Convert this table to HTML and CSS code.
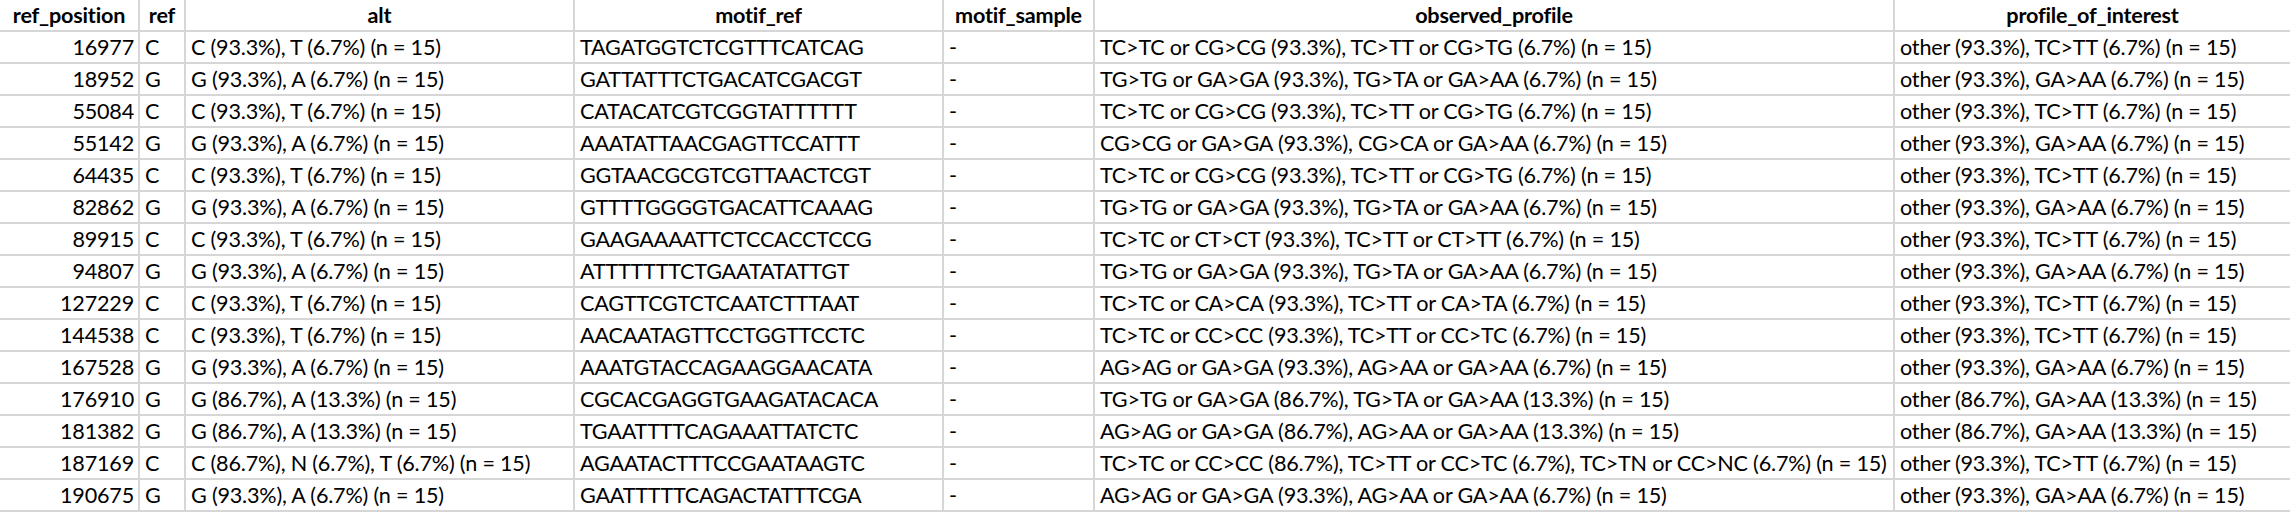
FILE: index.html
```html
<!DOCTYPE html>
<html>
<head>
<meta charset="utf-8">
<link rel="stylesheet" href="styles.css">
</head>
<body>
<table class="sheet">
<colgroup>
<col class="c-pos"><col class="c-ref"><col class="c-alt"><col class="c-motif"><col class="c-sample"><col class="c-obs"><col class="c-poi">
</colgroup>
<thead>
<tr><th>ref_position</th><th>ref</th><th>alt</th><th>motif_ref</th><th>motif_sample</th><th>observed_profile</th><th>profile_of_interest</th></tr>
</thead>
<tbody>
<tr><td class="num">16977</td><td>C</td><td>C (93.3%), T (6.7%) (n = 15)</td><td>TAGATGGTCTCGTTTCATCAG</td><td>-</td><td>TC&gt;TC or CG&gt;CG (93.3%), TC&gt;TT or CG&gt;TG (6.7%) (n = 15)</td><td>other (93.3%), TC&gt;TT (6.7%) (n = 15)</td></tr>
<tr><td class="num">18952</td><td>G</td><td>G (93.3%), A (6.7%) (n = 15)</td><td>GATTATTTCTGACATCGACGT</td><td>-</td><td>TG&gt;TG or GA&gt;GA (93.3%), TG&gt;TA or GA&gt;AA (6.7%) (n = 15)</td><td>other (93.3%), GA&gt;AA (6.7%) (n = 15)</td></tr>
<tr><td class="num">55084</td><td>C</td><td>C (93.3%), T (6.7%) (n = 15)</td><td>CATACATCGTCGGTATTTTTT</td><td>-</td><td>TC&gt;TC or CG&gt;CG (93.3%), TC&gt;TT or CG&gt;TG (6.7%) (n = 15)</td><td>other (93.3%), TC&gt;TT (6.7%) (n = 15)</td></tr>
<tr><td class="num">55142</td><td>G</td><td>G (93.3%), A (6.7%) (n = 15)</td><td>AAATATTAACGAGTTCCATTT</td><td>-</td><td>CG&gt;CG or GA&gt;GA (93.3%), CG&gt;CA or GA&gt;AA (6.7%) (n = 15)</td><td>other (93.3%), GA&gt;AA (6.7%) (n = 15)</td></tr>
<tr><td class="num">64435</td><td>C</td><td>C (93.3%), T (6.7%) (n = 15)</td><td>GGTAACGCGTCGTTAACTCGT</td><td>-</td><td>TC&gt;TC or CG&gt;CG (93.3%), TC&gt;TT or CG&gt;TG (6.7%) (n = 15)</td><td>other (93.3%), TC&gt;TT (6.7%) (n = 15)</td></tr>
<tr><td class="num">82862</td><td>G</td><td>G (93.3%), A (6.7%) (n = 15)</td><td>GTTTTGGGGTGACATTCAAAG</td><td>-</td><td>TG&gt;TG or GA&gt;GA (93.3%), TG&gt;TA or GA&gt;AA (6.7%) (n = 15)</td><td>other (93.3%), GA&gt;AA (6.7%) (n = 15)</td></tr>
<tr><td class="num">89915</td><td>C</td><td>C (93.3%), T (6.7%) (n = 15)</td><td>GAAGAAAATTCTCCACCTCCG</td><td>-</td><td>TC&gt;TC or CT&gt;CT (93.3%), TC&gt;TT or CT&gt;TT (6.7%) (n = 15)</td><td>other (93.3%), TC&gt;TT (6.7%) (n = 15)</td></tr>
<tr><td class="num">94807</td><td>G</td><td>G (93.3%), A (6.7%) (n = 15)</td><td>ATTTTTTTCTGAATATATTGT</td><td>-</td><td>TG&gt;TG or GA&gt;GA (93.3%), TG&gt;TA or GA&gt;AA (6.7%) (n = 15)</td><td>other (93.3%), GA&gt;AA (6.7%) (n = 15)</td></tr>
<tr><td class="num">127229</td><td>C</td><td>C (93.3%), T (6.7%) (n = 15)</td><td>CAGTTCGTCTCAATCTTTAAT</td><td>-</td><td>TC&gt;TC or CA&gt;CA (93.3%), TC&gt;TT or CA&gt;TA (6.7%) (n = 15)</td><td>other (93.3%), TC&gt;TT (6.7%) (n = 15)</td></tr>
<tr><td class="num">144538</td><td>C</td><td>C (93.3%), T (6.7%) (n = 15)</td><td>AACAATAGTTCCTGGTTCCTC</td><td>-</td><td>TC&gt;TC or CC&gt;CC (93.3%), TC&gt;TT or CC&gt;TC (6.7%) (n = 15)</td><td>other (93.3%), TC&gt;TT (6.7%) (n = 15)</td></tr>
<tr><td class="num">167528</td><td>G</td><td>G (93.3%), A (6.7%) (n = 15)</td><td>AAATGTACCAGAAGGAACATA</td><td>-</td><td>AG&gt;AG or GA&gt;GA (93.3%), AG&gt;AA or GA&gt;AA (6.7%) (n = 15)</td><td>other (93.3%), GA&gt;AA (6.7%) (n = 15)</td></tr>
<tr><td class="num">176910</td><td>G</td><td>G (86.7%), A (13.3%) (n = 15)</td><td>CGCACGAGGTGAAGATACACA</td><td>-</td><td>TG&gt;TG or GA&gt;GA (86.7%), TG&gt;TA or GA&gt;AA (13.3%) (n = 15)</td><td>other (86.7%), GA&gt;AA (13.3%) (n = 15)</td></tr>
<tr><td class="num">181382</td><td>G</td><td>G (86.7%), A (13.3%) (n = 15)</td><td>TGAATTTTCAGAAATTATCTC</td><td>-</td><td>AG&gt;AG or GA&gt;GA (86.7%), AG&gt;AA or GA&gt;AA (13.3%) (n = 15)</td><td>other (86.7%), GA&gt;AA (13.3%) (n = 15)</td></tr>
<tr><td class="num">187169</td><td>C</td><td>C (86.7%), N (6.7%), T (6.7%) (n = 15)</td><td>AGAATACTTTCCGAATAAGTC</td><td>-</td><td>TC&gt;TC or CC&gt;CC (86.7%), TC&gt;TT or CC&gt;TC (6.7%), TC&gt;TN or CC&gt;NC (6.7%) (n = 15)</td><td>other (93.3%), TC&gt;TT (6.7%) (n = 15)</td></tr>
<tr><td class="num">190675</td><td>G</td><td>G (93.3%), A (6.7%) (n = 15)</td><td>GAATTTTTCAGACTATTTCGA</td><td>-</td><td>AG&gt;AG or GA&gt;GA (93.3%), AG&gt;AA or GA&gt;AA (6.7%) (n = 15)</td><td>other (93.3%), GA&gt;AA (6.7%) (n = 15)</td></tr>
</tbody>
</table>
</body>
</html>
```
FILE: styles.css
```css
html, body {
  margin: 0;
  padding: 0;
  background: #ffffff;
}
.sheet {
  table-layout: fixed;
  border-collapse: separate;
  border-spacing: 0;
  width: 2290px;
  font-family: Lato, "Open Sans", sans-serif;
  font-size: 21.6px;
  letter-spacing: -0.2px;
  color: #000000;
}
.c-pos { width: 140px; }
.c-ref { width: 46px; }
.c-alt { width: 389px; }
.c-motif { width: 369px; }
.c-sample { width: 151px; }
.c-obs { width: 800px; }
.c-poi { width: 395px; }
.sheet th,
.sheet td {
  box-sizing: border-box;
  height: 32px;
  padding: 0 5px;
  line-height: 30px;
  border-right: 2px solid #d6d6d6;
  border-bottom: 2px solid #d6d6d6;
  white-space: nowrap;
  overflow: hidden;
  text-align: left;
  vertical-align: middle;
}
.sheet th {
  font-weight: 700;
  text-align: center;
}
.sheet th:last-child,
.sheet td:last-child {
  border-right: none;
}
.sheet td.num {
  text-align: right;
  padding-right: 4px;
}
```
